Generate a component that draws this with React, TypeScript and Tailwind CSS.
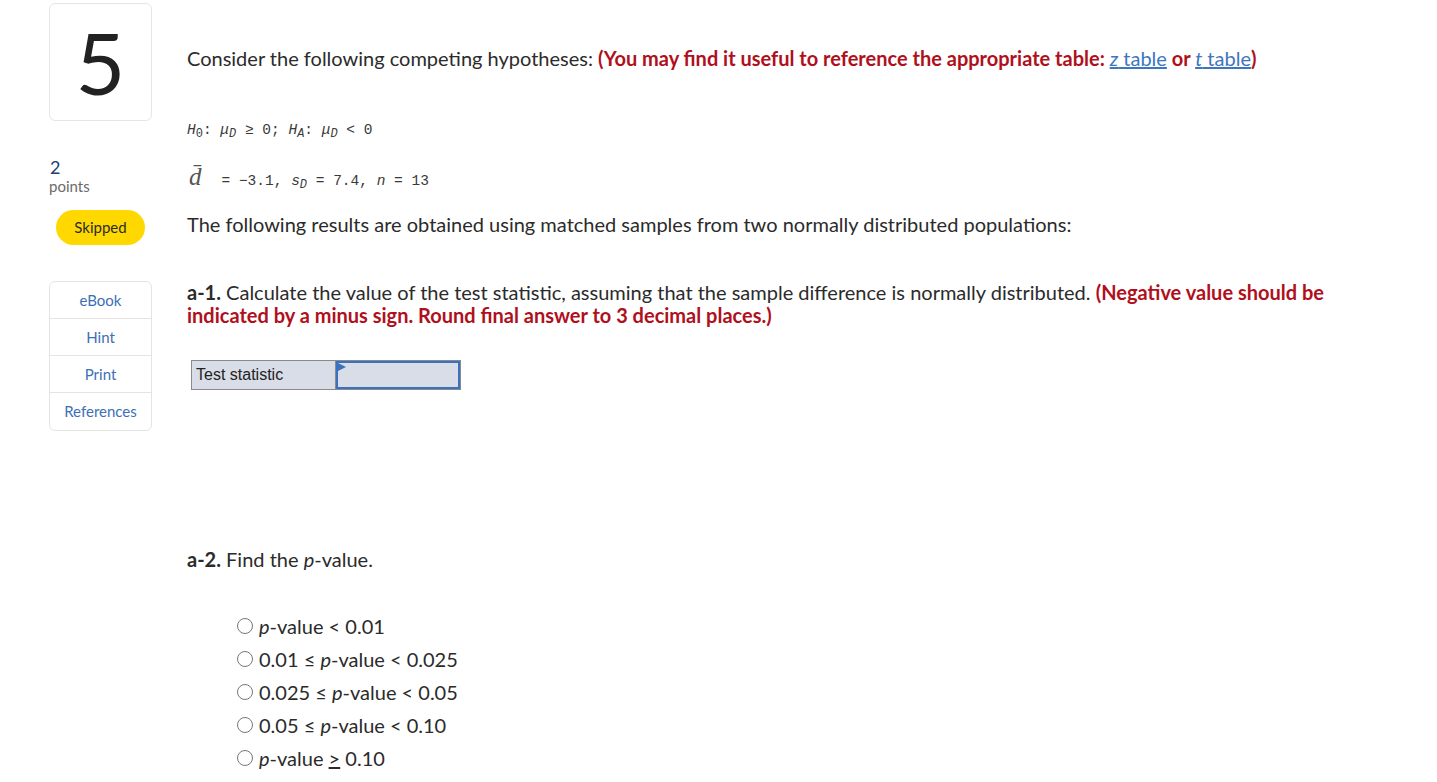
import React from "react";

const sans = { fontFamily: "Lato, 'Open Sans', sans-serif" };
const mono = { fontFamily: "'Liberation Mono', monospace" };

const navItems = ["eBook", "Hint", "Print", "References"];

const options: React.ReactNode[] = [
  <><i>p</i>-value &lt; 0.01</>,
  <>0.01 ≤ <i>p</i>-value &lt; 0.025</>,
  <>0.025 ≤ <i>p</i>-value &lt; 0.05</>,
  <>0.05 ≤ <i>p</i>-value &lt; 0.10</>,
  <><i>p</i>-value <span className="underline">&gt;</span> 0.10</>,
];

function Sidebar() {
  return (
    <div className="w-[103px] shrink-0 pt-[3px] flex flex-col" style={sans}>
      <div className="h-[118px] rounded-md border border-[#e6e6e6] flex items-center justify-center">
        <span className="text-[86px] leading-none text-[#222] font-normal">5</span>
      </div>
      <div className="mt-[36px] text-[18px] leading-[20px] text-[#1d3f73] pl-px">2</div>
      <div className="text-[15px] leading-[18px] text-[#6a6a6a]">points</div>
      <div className="mt-[15px] ml-[7px] w-[89px] h-[35px] rounded-full bg-[#ffd800] flex items-center justify-center text-[15px] text-[#2b2b2b]">
        Skipped
      </div>
      <div className="mt-[36px] border border-[#e4e4e4] rounded-md flex flex-col">
        {navItems.map((n, i) => (
          <div
            key={n}
            className={`h-[37px] flex items-center justify-center text-[15px] text-[#3d6fb6] ${i < navItems.length - 1 ? "border-b border-[#e4e4e4]" : ""}`}
          >
            {n}
          </div>
        ))}
      </div>
    </div>
  );
}

export default function App() {
  return (
    <div className="min-h-screen bg-white flex pl-[49px] text-[#2b2b2b]">
      <Sidebar />
      <div className="ml-[35px] w-[1150px]">
        <p className="mt-[46px] text-[20px] leading-[24px]" style={sans}>
          Consider the following competing hypotheses:{" "}
          <b className="text-[#b0101c] font-bold">
            (You may find it useful to reference the appropriate table:{" "}
            <a className="text-[#3d76c0] font-normal underline"><i>z</i> table</a> or{" "}
            <a className="text-[#3d76c0] font-normal underline"><i>t</i> table</a>)
          </b>
        </p>
        <div className="mt-[52px] text-[14.5px] leading-[17px] text-[#3a3a3a]" style={mono}>
          <i>H</i><sub className="text-[12px]">0</sub>: <i>μ</i><sub className="text-[12px]"><i>D</i></sub> ≥ 0; <i>H</i><sub className="text-[12px]"><i>A</i></sub>: <i>μ</i><sub className="text-[12px]"><i>D</i></sub> &lt; 0
        </div>
        <div className="mt-[19px] flex items-baseline text-[14.5px] text-[#3a3a3a]" style={mono}>
          <span className="text-[25px] italic text-[#555] mr-[20px] ml-[2px]" style={{ fontFamily: "'Liberation Serif', serif" }}>
            d̄
          </span>
          <span>= −3.1, <i>s</i><sub className="text-[12px]"><i>D</i></sub> = 7.4, <i>n</i> = 13</span>
        </div>
        <p className="mt-[16px] text-[20px] leading-[24px]" style={sans}>
          The following results are obtained using matched samples from two normally distributed populations:
        </p>
        <p className="mt-[45px] text-[20px] leading-[23px]" style={sans}>
          <b className="font-bold">a-1.</b> Calculate the value of the test statistic, assuming that the sample difference is normally distributed.{" "}
          <b className="text-[#b0101c] font-bold">
            (Negative value should be indicated by a minus sign. Round final answer to 3 decimal places.)
          </b>
        </p>
        <div className="mt-[33px] ml-[4px] flex w-[270px] h-[30px] border border-[#8a8a8a] bg-[#d9dde8]" style={{ fontFamily: "'Liberation Sans', sans-serif" }}>
          <div className="w-[144px] border-r border-[#8a8a8a] flex items-center pl-[4px] text-[16px] text-[#222]">
            Test statistic
          </div>
          <div className="relative flex-1 border-2 border-[#3a72bd] bg-[#d9dde8]">
            <svg className="absolute left-0 top-0" width="8" height="9" viewBox="0 0 8 9">
              <path d="M0 0 L8 4 L0 8 Z" fill="#3a72bd" />
            </svg>
          </div>
        </div>
        <p className="mt-[157px] text-[20px] leading-[24px]" style={sans}>
          <b className="font-bold">a-2.</b> Find the <i>p</i>-value.
        </p>
        <div className="mt-[43px] ml-[50px] flex flex-col gap-[9px]" style={sans}>
          {options.map((o, i) => (
            <label key={i} className="flex items-center h-[24px] text-[20px]">
              <span className="w-[16px] h-[16px] rounded-full border border-[#777] mr-[6px]" />
              <span>{o}</span>
            </label>
          ))}
        </div>
      </div>
    </div>
  );
}
